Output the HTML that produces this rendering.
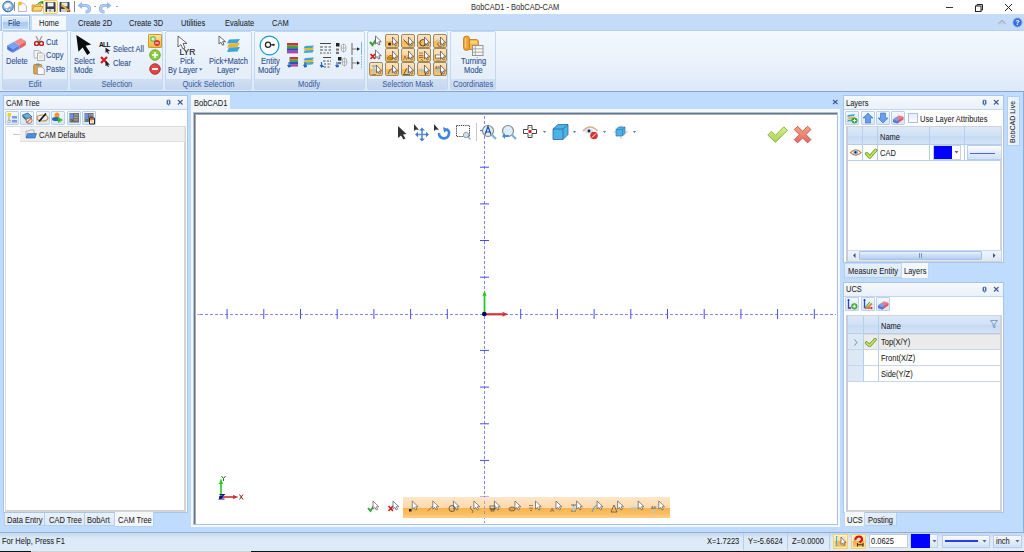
<!DOCTYPE html>
<html><head><meta charset="utf-8">
<style>
*{box-sizing:border-box;margin:0;padding:0}
html,body{width:1024px;height:552px;overflow:hidden;background:#bfdbfd;font-family:"Liberation Sans",sans-serif;font-size:8.5px;color:#222}
.a{position:absolute}
.t{position:absolute;white-space:nowrap;line-height:1;transform:scaleX(.915);transform-origin:0 0;-webkit-text-stroke:.05px currentColor}
.g{position:absolute;top:31px;height:59px;border:1px solid #c3d7f0;border-radius:2px;background:linear-gradient(#f1f7fe,#e6eff9 70%,#e2ecf8)}
.gl{position:absolute;left:0;right:0;bottom:0;height:10px;background:linear-gradient(#cfdff3,#c6d8ef);color:#3d5fa0;text-align:center;font-size:8.2px;line-height:11px;white-space:nowrap;-webkit-text-stroke:.05px currentColor}
.ob{position:absolute;width:14px;height:14px;border:1px solid #9c8a5e;border-radius:2px;background:linear-gradient(#fde2bc 0%,#fcd7a8 48%,#f9b552 55%,#fbc46c 100%);overflow:hidden}
.ob svg{position:absolute;left:0;top:0}
.tb{position:absolute;width:14px;height:14px;border:1px solid #b9d1ef;border-radius:1px;background:linear-gradient(#f3f8fe,#d6e6f8)}
.gl span{display:inline-block;transform:scaleX(.915)}
.rb{position:absolute;white-space:nowrap;line-height:1;font-size:8.2px;transform:scaleX(.915);transform-origin:0 0;color:#2f4f8f;-webkit-text-stroke:.1px currentColor}
</style></head><body>
<!-- title bar -->
<div class="a" style="left:0;top:0;width:1024px;height:14px;background:#fff"></div>
<div class="t" style="left:471px;top:4px;font-size:8.2px;color:#333">BobCAD1 - BobCAD-CAM</div>
<!-- QAT -->
<svg class="a" style="left:1px;top:0" width="124" height="14" viewBox="0 0 124 14">
<circle cx="7" cy="6.5" r="5.3" fill="#8fb6e0" stroke="#3a70b0" stroke-width="1"/>
<path d="M3 5 Q5.5 2.2 9 3.5 L10.8 6.5 L8.5 6.2 L6 8.5 L3.5 7.5 Z" fill="#f2f8ff"/><path d="M5 9.8 H6.2 M7.8 9.8 H9" stroke="#fff" stroke-width="1.3"/>
<path d="M2.5 9 Q4 11.5 7 11.8" stroke="#2a5aa0" stroke-width=".8" fill="none"/>
<path d="M13.5 2 V11" stroke="#888" stroke-width="1"/>
<path d="M17.5 3 H22.5 L25.5 6 V11.5 H17.5 Z" fill="#fafafa" stroke="#aaa" stroke-width=".8"/>
<circle cx="19" cy="3.5" r="2" fill="#f0c020"/>
<path d="M31 5 H35 L36 4 H40 V11 H31 Z" fill="#f0c860" stroke="#c08a20" stroke-width=".7"/>
<path d="M31 11 L33 6.5 H42 L40 11 Z" fill="#f7d778" stroke="#c08a20" stroke-width=".7"/>
<path d="M37 3.5 Q39 1.5 41 2 L41 1 L42.5 2.8 L41 4 L41 3" stroke="#2a9a2a" stroke-width="1" fill="#2a9a2a"/>
<rect x="42.5" y=".5" width="14" height="13" rx="1.5" fill="#fdf3d0" stroke="#f4cc60" stroke-width="1"/>
<rect x="44.5" y="2" width="10" height="10" rx="1" fill="#3a3d4c"/><rect x="46.5" y="2.5" width="6" height="4" fill="#f2f2f2"/><rect x="46" y="9" width="7" height="3" fill="#ddd"/><rect x="48.5" y="9.5" width="1" height="2" fill="#555"/>
<rect x="58.5" y="2" width="10" height="10" rx="1" fill="#3a3d4c"/><rect x="60.5" y="2.5" width="6" height="4" fill="#e8e8e8"/><rect x="60" y="9" width="6" height="3" fill="#ccc"/>
<path d="M61 5 L68 11" stroke="#e8b030" stroke-width="2"/><circle cx="68.5" cy="11" r="1" fill="#d03030"/>
<path d="M73.5 1 V12" stroke="#888" stroke-width="1"/>
<path d="M80 5.5 H84 Q88.5 5.5 88.5 8.8 Q88.5 12 84.5 12" stroke="#8fb0e0" stroke-width="3.2" fill="none"/><path d="M80 5.5 H84 Q88.5 5.5 88.5 8.8 Q88.5 12 84.5 12" stroke="#b8d0f2" stroke-width="1.6" fill="none"/><path d="M76.5 5.5 L81 2 V9 Z" fill="#9ab8e6"/>
<path d="M93 6.5 H95" stroke="#8aa8d0" stroke-width="1"/>
<path d="M106 5.5 H103 Q99.5 5.5 99.5 8.8 Q99.5 12 103.5 12" stroke="#8fb0e0" stroke-width="3.2" fill="none"/><path d="M106 5.5 H103 Q99.5 5.5 99.5 8.8 Q99.5 12 103.5 12" stroke="#b8d0f2" stroke-width="1.6" fill="none"/><path d="M110.5 5.5 L106 2 V9 Z" fill="#9ab8e6"/>
<path d="M115 6.5 H117" stroke="#8aa8d0" stroke-width="1"/>
</svg>
<!-- window controls -->
<div class="a" style="left:946px;top:7px;width:7px;height:1px;background:#333"></div>
<svg class="a" style="left:974px;top:3px" width="10" height="10" viewBox="0 0 10 10"><rect x="1.5" y="3" width="5.5" height="5.5" fill="none" stroke="#222" stroke-width="1"/><path d="M3 3 V1.5 H8.5 V7 H7" fill="none" stroke="#222" stroke-width="1"/></svg>
<svg class="a" style="left:1004px;top:3px" width="9" height="9" viewBox="0 0 9 9"><path d="M1 1 L8 8 M8 1 L1 8" stroke="#222" stroke-width="1"/></svg>
<!-- ribbon tab strip -->
<div class="a" style="left:0;top:14px;width:1024px;height:17px;background:#c4dcf8"></div>
<div class="a" style="left:1px;top:15px;width:29px;height:16px;background:linear-gradient(#e2eefc 0%,#d0e2f8 42%,#a8c8ef 47%,#b4d2f4 75%,#c6def9 100%);border:1px solid #9ebde6;box-shadow:inset 0 0 0 1px rgba(255,255,255,.6)"></div>
<div class="t" style="left:8px;top:20px;font-size:8.2px;color:#1f3f7a">File</div>
<div class="a" style="left:31px;top:15px;width:36px;height:17px;background:#f3f8fe;border:1px solid #c9dbef;border-bottom:none"></div>
<div class="t" style="left:39px;top:20px;font-size:8.2px;color:#222">Home</div>
<div class="t" style="left:78px;top:20px;font-size:8.2px;color:#222">Create 2D</div>
<div class="t" style="left:129px;top:20px;font-size:8.2px;color:#222">Create 3D</div>
<div class="t" style="left:181px;top:20px;font-size:8.2px;color:#222">Utilities</div>
<div class="t" style="left:225px;top:20px;font-size:8.2px;color:#222">Evaluate</div>
<div class="t" style="left:272px;top:20px;font-size:8.2px;color:#222">CAM</div>
<svg class="a" style="left:997px;top:18px" width="10" height="8" viewBox="0 0 10 8"><path d="M1.5 5.5 L5 2.5 L8.5 5.5" stroke="#999" stroke-width="1" fill="none"/><path d="M2.5 6.8 L5 4.6 L7.5 6.8" stroke="#bbb" stroke-width=".8" fill="none"/></svg>
<svg class="a" style="left:1012px;top:17px" width="11" height="11" viewBox="0 0 11 11"><circle cx="5.5" cy="5.5" r="4.7" fill="#3a6ad8" stroke="#a8c4ec" stroke-width="1"/><text x="5.5" y="8.3" font-size="7" font-weight="bold" fill="#fff" text-anchor="middle" font-family="Liberation Sans">?</text></svg>
<!-- ribbon body -->
<div class="a" style="left:0;top:30px;width:1024px;height:62px;background:linear-gradient(#d9e8fb,#c9ddf6);border-top:1px solid #b5cff0;border-bottom:1px solid #82a7d6"></div>
<div class="a" style="left:0;top:31px;width:1024px;height:60px;background:linear-gradient(#f3f8fe 0%,#eaf2fc 55%,#dce9f8 100%)"></div>
<!-- groups -->
<div class="g" style="left:2px;width:66px"><div class="gl"><span>Edit</span></div></div>
<div class="g" style="left:70px;width:93px"><div class="gl"><span>Selection</span></div></div>
<div class="g" style="left:165px;width:87px"><div class="gl"><span>Quick Selection</span></div></div>
<div class="g" style="left:254px;width:111px"><div class="gl"><span>Modify</span></div></div>
<div class="g" style="left:367px;width:81px"><div class="gl"><span>Selection Mask</span></div></div>
<div class="g" style="left:450px;width:46px"><div class="gl"><span>Coordinates</span></div></div>
<!-- ribbon content -->
<!-- Edit -->
<svg class="a" style="left:4px;top:34px" width="26" height="22" viewBox="4 34 26 22">
<path d="M7.2 45.6 L14 41.8 L19.5 45.2 L12.8 49 Z" fill="#7aa2f4"/>
<path d="M14 41.8 L20.7 38 L26 41.2 L19.5 45.2 Z" fill="#f48a8a"/>
<path d="M7.2 45.6 L12.8 49 L12.8 52.7 L7.2 49.6 Z" fill="#4a72dc"/>
<path d="M12.8 49 L19.5 45.2 L19.3 49 L12.8 52.7 Z" fill="#5a82e4"/>
<path d="M19.5 45.2 L26 41.2 L25.7 45.2 L19.3 49 Z" fill="#e46060"/>
</svg>
<div class="rb" style="left:6px;top:58px">Delete</div>
<svg class="a" style="left:34px;top:36px" width="10" height="10" viewBox="0 0 10 10">
<path d="M2 0 L5 6 M8 0 L5 6" stroke="#999" stroke-width="1.2"/>
<circle cx="2.6" cy="7.5" r="2" fill="none" stroke="#b8231c" stroke-width="1.6"/>
<circle cx="7.4" cy="7.5" r="2" fill="none" stroke="#b8231c" stroke-width="1.6"/>
</svg>
<div class="rb" style="left:46px;top:39px">Cut</div>
<svg class="a" style="left:33px;top:50px" width="12" height="11" viewBox="0 0 12 11">
<path d="M1 .5 H6 L7.5 2 V8 H1 Z" fill="#f4f4f4" stroke="#aaa" stroke-width=".8"/>
<path d="M4.5 3 H9.5 L11.5 5 V10.5 H4.5 Z" fill="#f8f8f8" stroke="#999" stroke-width=".8"/>
<path d="M6 6 H10 M6 8 H10" stroke="#bbb" stroke-width=".7"/>
</svg>
<div class="rb" style="left:46px;top:52px">Copy</div>
<svg class="a" style="left:33px;top:63px" width="12" height="12" viewBox="0 0 12 12">
<rect x=".7" y="1.5" width="8" height="9.5" rx="1" fill="#d9a650" stroke="#a87828" stroke-width=".8"/>
<rect x="3" y=".5" width="3.5" height="2" fill="#888"/>
<path d="M4.5 4 H9 L11.3 6.3 V11.5 H4.5 Z" fill="#f8f8f8" stroke="#999" stroke-width=".8"/>
</svg>
<div class="rb" style="left:46px;top:66px">Paste</div>
<!-- Selection -->
<svg class="a" style="left:75px;top:34px" width="18" height="22" viewBox="75 34 18 22">
<path d="M76.3 35 L91.2 44.6 L85.6 45.8 L90.2 52.8 L87.2 54.9 L82.6 47.6 L78.4 51.8 Z" fill="#0c0c0c"/>
</svg>
<div class="rb" style="left:74px;top:58px">Select</div>
<div class="rb" style="left:74px;top:67px">Mode</div>
<div class="a" style="left:99px;top:42px;font-size:6.5px;font-weight:bold;letter-spacing:-.6px;line-height:1;color:#111">ALL</div>
<svg class="a" style="left:105px;top:47px" width="6" height="7" viewBox="0 0 6 7"><path d="M.5 .5 L5.5 4 L3 4.3 L4 6.5 L3 7 L2 4.8 L.5 6 Z" fill="#222"/></svg>
<div class="rb" style="left:113px;top:46px">Select All</div>
<svg class="a" style="left:100px;top:56px" width="11" height="11" viewBox="0 0 11 11">
<path d="M1 1 L7 7 M7 1 L1 7" stroke="#d02020" stroke-width="2.2"/>
<path d="M5.5 5 L10 8.5 L8 8.8 L9 10.8 L8 11 L7 9.2 L5.5 10.3 Z" fill="#222"/>
</svg>
<div class="rb" style="left:113px;top:59.5px">Clear</div>
<div class="a" style="left:148px;top:34px;width:14px;height:14px;border:1px solid #c99a2c;background:linear-gradient(#fde3a0,#f7b445);border-radius:1px"></div>
<svg class="a" style="left:149px;top:35px" width="12" height="12" viewBox="0 0 12 12">
<circle cx="4" cy="4" r="3" fill="#7cc243"/><path d="M2.3 4 H5.7 M4 2.3 V5.7" stroke="#fff" stroke-width="1"/>
<circle cx="8" cy="8" r="3" fill="#d83a3a"/><path d="M6.3 8 H9.7" stroke="#fff" stroke-width="1"/>
</svg>
<svg class="a" style="left:149px;top:49px" width="12" height="12" viewBox="0 0 12 12">
<circle cx="6" cy="6" r="5.3" fill="#8ccc3f" stroke="#5c9e22" stroke-width=".8"/><path d="M3 6 H9 M6 3 V9" stroke="#fff" stroke-width="1.6"/>
</svg>
<svg class="a" style="left:149px;top:63px" width="12" height="12" viewBox="0 0 12 12">
<circle cx="6" cy="6" r="5.3" fill="#e04848" stroke="#a82020" stroke-width=".8"/><path d="M3 6 H9" stroke="#fff" stroke-width="1.8"/>
</svg>
<!-- Quick Selection -->
<svg class="a" style="left:177px;top:35px" width="12" height="15" viewBox="0 0 12 15">
<path d="M1 1 L1 12 L3.8 9.5 L6 14 L8 13 L6 8.5 L10 8.5 Z" fill="#fff" stroke="#555" stroke-width=".9"/>
</svg>
<div class="a" style="left:179.5px;top:48px;font-size:8.5px;line-height:1;color:#222;-webkit-text-stroke:.15px #222">LYR</div>
<div class="rb" style="left:180px;top:58px">Pick</div>
<div class="rb" style="left:168px;top:67px">By Layer</div>
<svg class="a" style="left:218px;top:35px" width="10" height="11" viewBox="0 0 10 11">
<path d="M1 1 L1 9 L3 7.3 L4.5 10.2 L6 9.5 L4.6 6.7 L7.5 6.7 Z" fill="#fff" stroke="#555" stroke-width=".9"/>
</svg>
<svg class="a" style="left:226px;top:38px" width="15" height="15" viewBox="0 0 15 15">
<path d="M3 1.5 L14 1 L11.5 5 L1 5.5 Z" fill="#3aa6e0"/>
<path d="M3 5.5 L14 5 L11.5 9 L1 9.5 Z" fill="#f3b51b"/>
<path d="M3 9.5 L14 9 L11.5 13.5 L1 14 Z" fill="#3aa6e0"/>
</svg>
<div class="rb" style="left:209px;top:58px">Pick+Match</div>
<div class="rb" style="left:217px;top:67px">Layer</div>
<svg class="a" style="left:198.5px;top:67.5px" width="4" height="3" viewBox="0 0 4 3"><path d="M0 .5 H3.5 L1.75 2.5 Z" fill="#3a5a98"/></svg>
<svg class="a" style="left:236px;top:67.5px" width="4" height="3" viewBox="0 0 4 3"><path d="M0 .5 H3.5 L1.75 2.5 Z" fill="#3a5a98"/></svg>
<!-- Modify -->
<svg class="a" style="left:259px;top:35px" width="21" height="21" viewBox="0 0 21 21">
<circle cx="10.5" cy="10.5" r="9.4" fill="#fff" stroke="#1f9ad4" stroke-width="1.3"/>
<circle cx="9" cy="9.8" r="2.6" fill="none" stroke="#222" stroke-width="1.2"/>
<path d="M11.6 9.8 H15.5" stroke="#222" stroke-width="1.2"/><circle cx="14.5" cy="9.8" r="1.1" fill="#222"/>
</svg>
<div class="rb" style="left:261px;top:58px">Entity</div>
<div class="rb" style="left:258px;top:67px">Modify</div>
<svg class="a" style="left:286px;top:42px" width="80" height="28" viewBox="0 0 80 28">
<rect x="1" y="1" width="11" height="2.6" fill="#d83030"/><rect x="1" y="3.6" width="11" height="2.6" fill="#38a838"/><rect x="1" y="6.2" width="11" height="2.6" fill="#3a4ab8"/><rect x="1" y="8.8" width="11" height="2.6" fill="#a848a8"/>
<path d="M19 4 L28 3.5 L26.5 6 L17.5 6.5 Z" fill="#3aa6e0"/><path d="M19 6.3 L28 5.8 L26.5 8.3 L17.5 8.8 Z" fill="#f3b51b"/><path d="M19 8.6 L28 8.1 L26.5 10.6 L17.5 11.1 Z" fill="#3aa6e0"/>
<path d="M34 1.5 H45" stroke="#444" stroke-width="1"/><path d="M34 5 H37 M38.5 5 H41 M42.5 5 H45 M34 8 H37 M38.5 8 H41 M42.5 8 H45 M34 11 H36 M37.5 11 H39.5 M41 11 H43 M44 11 H45" stroke="#555" stroke-width="1"/>
<rect x="50" y="1" width="3.5" height="3.5" fill="#222"/><rect x="50" y="6.5" width="3" height="2.2" fill="#777"/><rect x="50" y="9.8" width="3" height="2.2" fill="#777"/><ellipse cx="57.5" cy="6" rx="2.6" ry="4" fill="none" stroke="#999" stroke-width=".7"/><path d="M57.5 2 V10 M55 6 H60" stroke="#999" stroke-width=".6"/>
<path d="M66 1 V13" stroke="#555" stroke-width=".9"/><path d="M75.5 0 V13" stroke="#5ab8ec" stroke-width=".9"/><path d="M66 7 H72" stroke="#777" stroke-width=".9"/><path d="M71 5.3 L74 7 L71 8.7 Z" fill="#222"/>
<g transform="translate(0,14)">
<rect x="3.5" y="1" width="8.5" height="2.4" fill="#d83030"/><rect x="3.5" y="3.4" width="8.5" height="2.4" fill="#38a838"/><rect x="3.5" y="5.8" width="8.5" height="2.4" fill="#3a4ab8"/><rect x="3.5" y="8.2" width="8.5" height="2.4" fill="#a848a8"/>
<path d="M3 6 V10.5 H5 M1.5 9 L3 11 L4.5 9" stroke="#2060c0" stroke-width="1.1" fill="none"/>
<path d="M19 2 L28 1.5 L26.5 4 L17.5 4.5 Z" fill="#3aa6e0"/><path d="M19 4.3 L28 3.8 L26.5 6.3 L17.5 6.8 Z" fill="#f3b51b"/><path d="M19 6.6 L28 6.1 L26.5 8.6 L17.5 9.1 Z" fill="#3aa6e0"/>
<path d="M19 6 V10.5 H21 M17.5 9 L19 11 L20.5 9" stroke="#2060c0" stroke-width="1.1" fill="none"/>
<path d="M37 1.5 H45" stroke="#444" stroke-width="1"/><path d="M37 5 H39.5 M41 5 H43 M44 5 H45 M38 8 H40 M41.5 8 H43.5 M44.5 8 H45 M38 11 H40 M41.5 11 H43.5" stroke="#555" stroke-width="1"/>
<path d="M35.5 6 V10.5 H38 M34 9 L35.5 11 L37 9" stroke="#2060c0" stroke-width="1.1" fill="none"/>
<rect x="52" y="1" width="3.5" height="3.5" fill="#222"/><rect x="52" y="6" width="3" height="2.2" fill="#777"/><ellipse cx="58.5" cy="6" rx="2.4" ry="4" fill="none" stroke="#999" stroke-width=".7"/><path d="M58.5 2 V10 M56 6 H61" stroke="#999" stroke-width=".6"/>
<path d="M51 6 V10.5 H53 M49.5 9 L51 11 L52.5 9" stroke="#2060c0" stroke-width="1.1" fill="none"/>
<path d="M66 1 V13" stroke="#555" stroke-width=".9"/><path d="M75.5 0 V13" stroke="#5ab8ec" stroke-width=".9" stroke-dasharray="1.5 1"/><path d="M66 7 H72" stroke="#777" stroke-width=".9"/><path d="M71 5.3 L74 7 L71 8.7 Z" fill="#222"/>
</g>
</svg>
<!-- Selection Mask -->
<svg class="a" style="left:369px;top:35px" width="13" height="26" viewBox="0 0 13 26">
<path d="M1 7 L3.5 10 L8 3" stroke="#3aa030" stroke-width="2" fill="none"/>
<path d="M6.5 1 L6.5 9 L8.3 7.5 L9.6 10 L11 9.3 L9.8 6.8 L12.3 6.7 Z" fill="#fff" stroke="#555" stroke-width=".8"/>
<path d="M1.5 19 L6 24 M6 19 L1.5 24" stroke="#d02020" stroke-width="1.8"/>
<path d="M6.5 15 L6.5 23 L8.3 21.5 L9.6 24 L11 23.3 L9.8 20.8 L12.3 20.7 Z" fill="#fff" stroke="#555" stroke-width=".8"/>
</svg>
<div class="ob" style="left:385px;top:34px"><svg width="13" height="13" viewBox="0 0 13 13"><rect x="2.3" y="7.8" width="2.6" height="2.6" fill="#222"/><path d="M6.5 2 V9.8 L8.1 8.5 L9.2 10.9 L10.4 10.4 L9.3 8 L11.5 7.9 Z" fill="#fff" stroke="#444" stroke-width=".7"/></svg></div>
<div class="ob" style="left:401px;top:34px"><svg width="13" height="13" viewBox="0 0 13 13"><path d="M1.5 4.5 L8 11.5" stroke="#333" stroke-width=".8"/><path d="M6.5 2 V9.8 L8.1 8.5 L9.2 10.9 L10.4 10.4 L9.3 8 L11.5 7.9 Z" fill="#fff" stroke="#444" stroke-width=".7"/></svg></div>
<div class="ob" style="left:417px;top:34px"><svg width="13" height="13" viewBox="0 0 13 13"><circle cx="5" cy="7.8" r="3.2" fill="none" stroke="#333" stroke-width=".9"/><path d="M6.5 2 V9.8 L8.1 8.5 L9.2 10.9 L10.4 10.4 L9.3 8 L11.5 7.9 Z" fill="#fff" stroke="#444" stroke-width=".7"/></svg></div>
<div class="ob" style="left:433px;top:34px"><svg width="13" height="13" viewBox="0 0 13 13"><path d="M2 5.5 Q5 4.5 6 6" stroke="#8ad0f0" stroke-width="1" fill="none"/><path d="M5 7.5 Q2.5 8.5 4.5 11 Q6 12 8 11" stroke="#555" stroke-width=".8" fill="none"/><path d="M6.5 2 V9.8 L8.1 8.5 L9.2 10.9 L10.4 10.4 L9.3 8 L11.5 7.9 Z" fill="#fff" stroke="#444" stroke-width=".7"/></svg></div>
<div class="ob" style="left:385px;top:48px"><svg width="13" height="13" viewBox="0 0 13 13"><path d="M1.5 8.5 L4 6.5 L7.5 7 L7.5 9.5 L5 11 L1.5 10.5 Z" fill="#f0a020" stroke="#7a5010" stroke-width=".6"/><path d="M1.5 8.5 L5 9 L7.5 7 M5 9 V11" stroke="#7a5010" stroke-width=".5" fill="none"/><path d="M6.5 2 V9.8 L8.1 8.5 L9.2 10.9 L10.4 10.4 L9.3 8 L11.5 7.9 Z" fill="#fff" stroke="#444" stroke-width=".7"/></svg></div>
<div class="ob" style="left:401px;top:48px"><svg width="13" height="13" viewBox="0 0 13 13"><path d="M1.5 11 L3 7 L4.5 10.5 L6 8 L7.5 10" stroke="#666" stroke-width=".7" fill="none"/><path d="M6.5 2 V9.8 L8.1 8.5 L9.2 10.9 L10.4 10.4 L9.3 8 L11.5 7.9 Z" fill="#fff" stroke="#444" stroke-width=".7"/></svg></div>
<div class="ob" style="left:417px;top:48px"><svg width="13" height="13" viewBox="0 0 13 13"><path d="M2 3.5 V4.5 M4 3.5 V4.5 M2 5.8 V6.8 M4 5.8 V6.8 M2 8 V9 M4 8 V9 M3.5 10.5 L4.5 11.5" stroke="#222" stroke-width="1"/><path d="M6.5 2 V9.8 L8.1 8.5 L9.2 10.9 L10.4 10.4 L9.3 8 L11.5 7.9 Z" fill="#fff" stroke="#444" stroke-width=".7"/></svg></div>
<div class="ob" style="left:433px;top:48px"><svg width="13" height="13" viewBox="0 0 13 13"><rect x="1.5" y="6" width="6" height="3" fill="#fff" stroke="#555" stroke-width=".6"/><rect x="3" y="9.5" width="3.5" height="2" fill="none" stroke="#888" stroke-width=".6"/><path d="M6.5 2 V9.8 L8.1 8.5 L9.2 10.9 L10.4 10.4 L9.3 8 L11.5 7.9 Z" fill="#fff" stroke="#444" stroke-width=".7"/></svg></div>
<div class="ob" style="left:369px;top:62px"><svg width="13" height="13" viewBox="0 0 13 13"><path d="M1.8 3 H6 M1.8 11.5 H6" stroke="#777" stroke-width=".8"/><path d="M3 3.5 L5 3.5 L4.5 11 L3.5 11 Z" fill="#90d4f4"/><path d="M6.5 2 V9.8 L8.1 8.5 L9.2 10.9 L10.4 10.4 L9.3 8 L11.5 7.9 Z" fill="#fff" stroke="#444" stroke-width=".7"/></svg></div>
<div class="ob" style="left:385px;top:62px"><svg width="13" height="13" viewBox="0 0 13 13"><path d="M2 11 Q3 6.5 7 5" stroke="#444" stroke-width=".8" fill="none"/><path d="M4 10.5 L6.5 9" stroke="#8ad0f0" stroke-width="1.4"/><path d="M6.5 2 V9.8 L8.1 8.5 L9.2 10.9 L10.4 10.4 L9.3 8 L11.5 7.9 Z" fill="#fff" stroke="#444" stroke-width=".7"/></svg></div>
<div class="ob" style="left:401px;top:62px"><svg width="13" height="13" viewBox="0 0 13 13"><path d="M1.5 11.5 L5 5 M1.5 11.5 H8" stroke="#444" stroke-width=".8" fill="none"/><path d="M5 8 L7 11" stroke="#8ad0f0" stroke-width="1.4"/><path d="M6.5 2 V9.8 L8.1 8.5 L9.2 10.9 L10.4 10.4 L9.3 8 L11.5 7.9 Z" fill="#fff" stroke="#444" stroke-width=".7"/></svg></div>
<div class="ob" style="left:417px;top:62px"><svg width="13" height="13" viewBox="0 0 13 13"><path d="M1 7 Q4 6 7 7.5" stroke="#8ad0f0" stroke-width="1.6" fill="none"/><circle cx="7.5" cy="11" r=".8" fill="#111"/><path d="M6.5 2 V9.8 L8.1 8.5 L9.2 10.9 L10.4 10.4 L9.3 8 L11.5 7.9 Z" fill="#fff" stroke="#444" stroke-width=".7"/></svg></div>
<div class="ob" style="left:433px;top:62px"><svg width="13" height="13" viewBox="0 0 13 13"><text x="1" y="6" font-size="3.6" fill="#444" font-family="Liberation Sans">AB</text><path d="M1.5 8 Q4 7.5 6 9" stroke="#8ad0f0" stroke-width="1.4" fill="none"/><circle cx="7.5" cy="11" r=".8" fill="#111"/><path d="M6.5 2 V9.8 L8.1 8.5 L9.2 10.9 L10.4 10.4 L9.3 8 L11.5 7.9 Z" fill="#fff" stroke="#444" stroke-width=".7"/></svg></div>
<!-- Coordinates -->
<svg class="a" style="left:462px;top:35px" width="23" height="21" viewBox="462 35 23 21">
<rect x="467" y="39.5" width="11.5" height="10" rx="2.5" fill="#f6b444" stroke="#b87818" stroke-width=".8"/>
<rect x="468" y="41" width="9" height="2.5" fill="#fcd890" opacity=".8"/>
<rect x="463.5" y="36" width="6" height="14.5" rx="3" fill="#f0a030" stroke="#b87818" stroke-width=".8"/>
<rect x="464.8" y="38" width="1.6" height="10" fill="#fbd088" opacity=".8"/>
<rect x="472.5" y="45.5" width="10.5" height="10" fill="#f6f6f6" stroke="#8c8c8c" stroke-width=".9"/>
<path d="M472.5 48.8 H483 M472.5 52.2 H483 M475.3 45.5 V55.5" stroke="#9a9a9a" stroke-width=".8"/>
</svg>
<div class="rb" style="left:461px;top:58px">Turning</div>
<div class="rb" style="left:464px;top:67px">Mode</div>
<!-- left panel -->
<div class="a" style="left:3px;top:95px;width:185px;height:418px;background:#fff;border:1px solid #a9c5ea"></div>
<div class="a" style="left:4px;top:96px;width:183px;height:14px;background:linear-gradient(#f6f9fd,#eaf1fa);border-bottom:1px solid #c2d6ee"></div>
<div class="t" style="left:6px;top:100px;font-size:8.2px;color:#222">CAM Tree</div>
<svg class="a" style="left:165px;top:98px" width="20" height="9" viewBox="0 0 20 9">
<rect x="1.6" y="1.8" width="3.8" height="5" rx="1.4" fill="#4a6ca8"/><rect x="3" y="2.6" width="1" height="3" fill="#e8eef8"/><path d="M3.5 6.8 V8" stroke="#7a92c0" stroke-width=".8"/>
<path d="M13 2 L17.5 6.5 M17.5 2 L13 6.5" stroke="#3a5a98" stroke-width="1.1"/>
</svg>
<div class="tb" style="left:5px;top:111px"></div>
<div class="tb" style="left:20px;top:111px"></div>
<div class="tb" style="left:36px;top:111px"></div>
<div class="tb" style="left:51px;top:111px"></div>
<div class="tb" style="left:67px;top:111px"></div>
<div class="tb" style="left:82px;top:111px"></div>
<svg class="a" style="left:5px;top:111px" width="92" height="14" viewBox="0 0 92 14">
<rect x="2.5" y="2" width="3.5" height="3.5" fill="#f0d020"/><path d="M4 5.5 V10 M4 10 H6" stroke="#888" stroke-width=".8"/><circle cx="4" cy="10.5" r="1.2" fill="#fff" stroke="#888" stroke-width=".6"/>
<rect x="7" y="5" width="5" height="2.5" fill="#7a9ee0"/><rect x="7" y="9" width="5" height="2.5" fill="#7a9ee0"/>
<path d="M17.5 4 L23 2 L27 6 L21.5 8 Z" fill="#5ab4e0" stroke="#235" stroke-width=".6"/><path d="M17.5 4 L21.5 8 L21.5 10 L17.5 6 Z" fill="#2a6a9a"/>
<circle cx="24" cy="9.5" r="3" fill="none" stroke="#c87a40" stroke-width="1"/><path d="M21.5 12 L26.5 7" stroke="#d03030" stroke-width="1"/>
<ellipse cx="37.5" cy="7" rx="5.5" ry="3" fill="none" stroke="#c88a30" stroke-width="1.2"/><path d="M34 10.5 L41 2.5" stroke="#111" stroke-width="1.6"/>
<circle cx="52" cy="4" r="2.5" fill="#f0962a"/><ellipse cx="51" cy="8" rx="4" ry="2" fill="#2a6aa8"/><path d="M53 6 L58 9 L53 12 Z" fill="#38c038"/>
<rect x="64.5" y="2" width="9.5" height="9.5" fill="#6e6e6e"/><rect x="65" y="2.5" width="3" height="5.5" fill="#6a90e0"/><path d="M69.5 3.8 H70.5 M71.5 3.8 H72.5 M69.5 6.3 H70.5 M71.5 6.3 H72.5 M69.5 8.8 H70.5 M71.5 8.8 H72.5" stroke="#e0e0e0" stroke-width="1.2"/><rect x="65.3" y="9" width="1.2" height="1.2" fill="#2c2"/><rect x="67" y="9" width="1.2" height="1.2" fill="#d22"/>
<rect x="79.5" y="2" width="9" height="9" fill="#6e6e6e"/><rect x="80" y="2.5" width="3" height="5.5" fill="#6a90e0"/><path d="M84.5 3.8 H85.5 M86.5 3.8 H87.5" stroke="#e0e0e0" stroke-width="1.2"/><rect x="80.3" y="9" width="1.2" height="1.2" fill="#2c2"/><rect x="84" y="6.5" width="6" height="7" rx="1.2" fill="#2a2a2a"/><rect x="85" y="7.5" width="4" height="5" fill="#f4f0e0"/><path d="M85.5 9 L88 11.5" stroke="#e0a020" stroke-width="1"/><rect x="85" y="7.5" width="4" height="1.3" fill="#d04040"/>
</svg>
<div class="a" style="left:5px;top:126px;width:181px;height:386px;background:#fff;border-top:1px solid #d8dde3;border-left:1px solid #d8dde3;border-right:2px solid #d4d4d4;border-bottom:2px solid #d4d4d4"></div>
<div class="a" style="left:13px;top:134px;width:7px;height:1px;background:#c8c8c8"></div>
<div class="a" style="left:20px;top:127px;width:165px;height:15px;background:#f0f0f0;border-bottom:1px solid #dedede;border-right:1px solid #e4e4e4"></div>
<svg class="a" style="left:25px;top:129px" width="12" height="10" viewBox="0 0 12 10">
<path d="M1 2 H4 L5 1 H9 V8 H1 Z" fill="#eee" stroke="#999" stroke-width=".7"/>
<path d="M1 9 L2.5 4.5 H11.5 L10 9 Z" fill="#4a8ee0" stroke="#2a5ea8" stroke-width=".6"/>
</svg>
<div class="t" style="left:38.5px;top:132px;font-size:8.2px;color:#222">CAM Defaults</div>
<!-- left bottom tabs -->
<div class="a" style="left:4px;top:513px;width:41px;height:13px;background:linear-gradient(#e9f1fb,#dce8f7);border:1px solid #b7cfee;border-top:none"></div>
<div class="t" style="left:7px;top:517px;font-size:8.2px;color:#222">Data Entry</div>
<div class="a" style="left:45px;top:513px;width:40px;height:13px;background:linear-gradient(#e9f1fb,#dce8f7);border:1px solid #b7cfee;border-top:none;border-left:none"></div>
<div class="t" style="left:49px;top:517px;font-size:8.2px;color:#222">CAD Tree</div>
<div class="a" style="left:85px;top:513px;width:30px;height:13px;background:linear-gradient(#e9f1fb,#dce8f7);border:1px solid #b7cfee;border-top:none;border-left:none"></div>
<div class="t" style="left:87px;top:517px;font-size:8.2px;color:#222">BobArt</div>
<div class="a" style="left:115px;top:512px;width:39px;height:15px;background:#f4f8fd;border:1px solid #b7cfee;border-top:none;border-left:none"></div>
<div class="t" style="left:118px;top:517px;font-size:8.2px;color:#222">CAM Tree</div>
<!-- doc area -->
<div class="a" style="left:191px;top:95px;width:39px;height:15px;background:linear-gradient(#f7fafe,#eef4fc)"></div>
<div class="t" style="left:194px;top:100px;font-size:8.2px;color:#222">BobCAD1</div>
<div class="a" style="left:191px;top:109px;width:649px;height:418px;background:#f5f9fe"></div>
<div class="a" style="left:193px;top:112px;width:645px;height:413px;background:#fff;border:1px solid #a9c3e6"></div>
<div class="a" style="left:194px;top:113px;width:643px;height:411px;border-top:1px solid #6d737b;border-left:1px solid #6d737b;box-shadow:inset 1px 1px 0 #a8acb2"></div>
<svg class="a" style="left:194px;top:113px" width="643" height="411" viewBox="194 113 643 411">
<path d="M200 314.5 H836" stroke="#8484f6" stroke-width="1" stroke-dasharray="3 2"/>
<path d="M197.5 314.5 H199.5" stroke="#8484f6" stroke-width="1"/>
<path d="M484.5 116 V523" stroke="#8484f6" stroke-width="1" stroke-dasharray="3 2"/>
<path d="M227.1 309 V319 M263.8 309 V319 M300.5 309 V319 M337.2 309 V319 M373.9 309 V319 M410.6 309 V319 M447.3 309 V319 M520.7 309 V319 M557.4 309 V319 M594.1 309 V319 M630.8 309 V319 M667.5 309 V319 M704.2 309 V319 M740.9 309 V319 M777.6 309 V319 M814.3 309 V319 M480 130.6 H489 M480 167.2 H489 M480 203.9 H489 M480 240.5 H489 M480 277.2 H489 M480 350.4 H489 M480 387.1 H489 M480 423.8 H489 M480 460.4 H489 M480 497.1 H489 " stroke="#4a4af0" stroke-width="1"/>
<path d="M484.5 313 V294" stroke="#28c828" stroke-width="1.8"/><path d="M482.3 296.5 L484.5 290 L486.7 296.5 L484.5 295 Z" fill="#28c828"/>
<path d="M485 314.3 H504" stroke="#d83030" stroke-width="2.2"/><path d="M502 311.8 L508.5 314.3 L502 316.8 L503.5 314.3 Z" fill="#d83030"/>
<circle cx="484.3" cy="314" r="2.3" fill="#000060"/>
<!-- corner axes -->
<path d="M221 497 V483" stroke="#22cc22" stroke-width="1.6"/><path d="M219 484 L221 478.5 L223 484 Z" fill="#22cc22"/>
<path d="M222 497 H234" stroke="#d42a2a" stroke-width="1.6"/><path d="M233 495 L238.5 497 L233 499 Z" fill="#d42a2a"/>
<path d="M221.5 476 L223.5 478.5 L225.5 476 M223.5 478.5 V481" stroke="#207820" stroke-width="1" fill="none"/>
<path d="M239.5 494.5 L243 499.5 M243 494.5 L239.5 499.5" stroke="#902020" stroke-width="1"/>
<path d="M219.5 494.5 H224 L219.5 499 H224.5" stroke="#101090" stroke-width="1.2" fill="none"/>
<circle cx="220.8" cy="497.3" r="1.8" fill="#101080"/>
</svg>
<!-- view toolbar -->
<svg class="a" style="left:395px;top:122px" width="245" height="20" viewBox="395 122 245 20">
<path d="M398 126 L398 138 L401 135.5 L403.5 139.5 L405.5 138.5 L403 134.5 L406.5 134 Z" fill="#333"/>
<path d="M414 124 L414 131 L416 129.5 L419 130 Z" fill="#333"/>
<path d="M422 129.5 V139.5 M417 134.5 H427" stroke="#5a8ad8" stroke-width="1.6"/>
<path d="M422 127.5 L424.8 130.5 H419.2 Z M422 141.5 L424.8 138.5 H419.2 Z M415 134.5 L418 131.7 V137.3 Z M429 134.5 L426 131.7 V137.3 Z" fill="#4a7ad0"/>
<path d="M434 124 L434 131 L436 129.5 L439 130 Z" fill="#333"/>
<path d="M446.5 129 A5 5 0 1 1 439 133" stroke="#3f86e0" stroke-width="2.6" fill="none"/><path d="M443 127 L449 129.5 L444 132.5 Z" fill="#3f86e0"/>
<rect x="456.5" y="125.5" width="13" height="11" fill="none" stroke="#333" stroke-width="1" stroke-dasharray="1.2 1"/>
<circle cx="466" cy="135" r="2.6" fill="#cfe6f8" stroke="#888" stroke-width=".8"/><path d="M468 137 L470.5 139.5" stroke="#7aaee0" stroke-width="1.4"/>
<path d="M476.5 123 V141" stroke="#c8c8c8" stroke-width="1"/>
<circle cx="488" cy="131" r="5.5" fill="#dceefa" stroke="#888" stroke-width="1.2"/><path d="M492 135 L496 139" stroke="#7aaee0" stroke-width="2.2"/>
<path d="M485 134.5 L488 126.5 L491 134.5 M486 132 H490" stroke="#1a4a9a" stroke-width="1.2" fill="none"/>
<circle cx="508" cy="131" r="5.5" fill="#dceefa" stroke="#888" stroke-width="1.2"/><path d="M512 135 L516 139" stroke="#7aaee0" stroke-width="2.2"/>
<path d="M502 136 L505 133 V135 H509 V137 H505 V139 Z" fill="#4a88d8"/>
<path d="M528 125.5 H532 V129.5 H536.5 V133.5 H532 V137.5 H528 V133.5 H523.5 V129.5 H528 Z" fill="#fff" stroke="#333" stroke-width=".9"/>
<rect x="528.5" y="130" width="3" height="3" fill="#e02020"/><path d="M528 127.5 H532 M528 135.5 H532" stroke="#888" stroke-width=".5"/>
<path d="M543 131 H546 L544.5 133 Z" fill="#4a70b0"/>
<path d="M553 129 L558 124.5 H568 V134.5 L563 139.5 H553 Z" fill="#4ab4e6" stroke="#2a6a98" stroke-width=".8"/>
<path d="M553 129 H563 L568 124.5 M563 129 V139.5" stroke="#2a6a98" stroke-width=".8" fill="none"/>
<path d="M573 131 H576 L574.5 133 Z" fill="#4a70b0"/>
<path d="M583 131 Q590 123 597.5 131" stroke="#e0b080" stroke-width="1.6" fill="none"/>
<ellipse cx="589" cy="131" rx="4" ry="2.6" fill="#cfe2f8"/><circle cx="589" cy="131" r="1.4" fill="#224"/>
<circle cx="594" cy="135.5" r="3.8" fill="#d03838"/><path d="M592 137.5 L596 133.5" stroke="#fff" stroke-width="1"/>
<path d="M603 131 H606 L604.5 133 Z" fill="#4a70b0"/>
<path d="M613.5 132 H628 M621 125 V139" stroke="#f4a0a0" stroke-width=".8"/>
<path d="M616 129.5 L618.5 127 H625 V133.5 L622.5 136 H616 Z" fill="#4ab4e6" stroke="#3a7aa8" stroke-width=".7"/>
<path d="M616 129.5 H622.5 L625 127 M622.5 129.5 V136" stroke="#3a7aa8" stroke-width=".7" fill="none"/>
<path d="M633 131 H636 L634.5 133 Z" fill="#4a70b0"/>
</svg>
<svg class="a" style="left:766px;top:125px" width="47" height="19" viewBox="766 125 47 19">
<defs><linearGradient id="gck" x1="0" y1="0" x2="0" y2="1"><stop offset="0" stop-color="#dcf088"/><stop offset="1" stop-color="#a8d058"/></linearGradient>
<linearGradient id="gx" x1="0" y1="0" x2="0" y2="1"><stop offset="0" stop-color="#f0a47c"/><stop offset=".5" stop-color="#ea8a74"/><stop offset="1" stop-color="#e06464"/></linearGradient></defs>
<path d="M767.8 135 L771.5 131.3 L775.5 135.3 L783.8 126.8 L787.4 130.3 L775.5 142.3 Z" fill="url(#gck)" stroke="#8aba48" stroke-width="1"/>
<path d="M794.3 129.6 L797.6 126.3 L802.6 131.3 L807.6 126.3 L810.9 129.6 L805.9 134.6 L810.9 139.6 L807.6 142.9 L802.6 137.9 L797.6 142.9 L794.3 139.6 L799.3 134.6 Z" fill="url(#gx)" stroke="#cc5a54" stroke-width="1"/>
</svg>
<!-- bottom mask toolbar -->
<div class="a" style="left:403px;top:497px;width:267px;height:21px;background:linear-gradient(#fde6c8 0%,#fcd9ae 50%,#f9b24c 52%,#fbbe62 80%,#fcd08a 100%)"></div>
<svg class="a" style="left:366px;top:499px" width="305" height="17" viewBox="366 499 305 17">
<path d="M368 508 L370.5 511 L375 504" stroke="#3aa030" stroke-width="1.8" fill="none"/>
<path d="M373 501 V509 L375 507.5 L376.3 510 L377.6 509.3 L376.4 506.8 L378.8 506.7 Z" fill="#fff" stroke="#555" stroke-width=".7"/>
<path d="M388.5 506 L393 511 M393 506 L388.5 511" stroke="#d02020" stroke-width="1.6"/>
<path d="M393 501 V509 L395 507.5 L396.3 510 L397.6 509.3 L396.4 506.8 L398.8 506.7 Z" fill="#fff" stroke="#555" stroke-width=".7"/>
<path d="M412.3 501 V509 L414.3 507.5 L415.6 510 L416.9 509.3 L415.7 506.8 L418.1 506.7 Z" fill="#fff" stroke="#555" stroke-width=".7"/>
<path d="M432.8 501 V509 L434.8 507.5 L436.1 510 L437.4 509.3 L436.2 506.8 L438.6 506.7 Z" fill="#fff" stroke="#555" stroke-width=".7"/>
<path d="M427.8 511 L432.8 506" stroke="#444" stroke-width=".8" opacity=".7"/>
<path d="M453.4 501 V509 L455.4 507.5 L456.7 510 L458.0 509.3 L456.8 506.8 L459.2 506.7 Z" fill="#fff" stroke="#555" stroke-width=".7"/>
<path d="M473.9 501 V509 L475.9 507.5 L477.2 510 L478.5 509.3 L477.3 506.8 L479.7 506.7 Z" fill="#fff" stroke="#555" stroke-width=".7"/>
<path d="M494.4 501 V509 L496.4 507.5 L497.7 510 L499.0 509.3 L497.8 506.8 L500.2 506.7 Z" fill="#fff" stroke="#555" stroke-width=".7"/>
<path d="M515.0 501 V509 L517.0 507.5 L518.3 510 L519.6 509.3 L518.4 506.8 L520.8 506.7 Z" fill="#fff" stroke="#555" stroke-width=".7"/>
<path d="M535.5 501 V509 L537.5 507.5 L538.8 510 L540.1 509.3 L538.9 506.8 L541.3 506.7 Z" fill="#fff" stroke="#555" stroke-width=".7"/>
<path d="M556.0 501 V509 L558.0 507.5 L559.3 510 L560.6 509.3 L559.4 506.8 L561.8 506.7 Z" fill="#fff" stroke="#555" stroke-width=".7"/>
<path d="M576.6 501 V509 L578.6 507.5 L579.9 510 L581.2 509.3 L580.0 506.8 L582.4 506.7 Z" fill="#fff" stroke="#555" stroke-width=".7"/>
<path d="M597.1 501 V509 L599.1 507.5 L600.4 510 L601.7 509.3 L600.5 506.8 L602.9 506.7 Z" fill="#fff" stroke="#555" stroke-width=".7"/>
<path d="M617.7 501 V509 L619.7 507.5 L621.0 510 L622.3 509.3 L621.1 506.8 L623.5 506.7 Z" fill="#fff" stroke="#555" stroke-width=".7"/>
<path d="M638.2 501 V509 L640.2 507.5 L641.5 510 L642.8 509.3 L641.6 506.8 L644.0 506.7 Z" fill="#fff" stroke="#555" stroke-width=".7"/>
<path d="M658.8 501 V509 L660.8 507.5 L662.0 510 L663.4 509.3 L662.1 506.8 L664.5 506.7 Z" fill="#fff" stroke="#555" stroke-width=".7"/>
<path d="M484.5 496 V518" stroke="#8a80e8" stroke-width="1" stroke-dasharray="3 2" opacity=".7"/>
<rect x="409" y="509" width="2.5" height="2.5" fill="#222"/>
<circle cx="452" cy="508.5" r="3" fill="none" stroke="#444" stroke-width=".8"/>
<path d="M471 506 Q469 509 472 510 Q474 511 472 513" stroke="#555" stroke-width=".8" fill="none"/>
<rect x="490" y="506" width="5" height="3" fill="none" stroke="#444" stroke-width=".7"/><rect x="491" y="509" width="3" height="2" fill="none" stroke="#444" stroke-width=".7"/>
<ellipse cx="512" cy="509" rx="3" ry="2" fill="#e6a040" stroke="#444" stroke-width=".6"/>
<path d="M530 505 V506 M532 505 V506 M530 507.5 V508.5 M532 507.5 V508.5 M531 510 V511" stroke="#222" stroke-width="1"/>
<text x="550" y="512" font-size="6" fill="#555" font-family="Liberation Sans">A</text>
<path d="M571 505 H576 M573.5 505 V511 M571 511 H576" stroke="#555" stroke-width=".8"/><rect x="572.5" y="506" width="2" height="5" fill="#9ad0f0"/>
<path d="M592 512 Q593 507 597 505" stroke="#9ad0f0" stroke-width="1.2" fill="none"/><path d="M592 512 Q593 507 597 505" stroke="#555" stroke-width=".5" fill="none"/>
<path d="M611 512 L614 505 L617 512 Z" fill="none" stroke="#555" stroke-width=".8"/>
<path d="M631 508 H637" stroke="#9ad0f0" stroke-width="1.6"/>
<text x="651" y="509" font-size="4" fill="#555" font-family="Liberation Sans">AB</text><path d="M652 510 Q655 511 656 513" stroke="#9ad0f0" stroke-width="1.2" fill="none"/>
</svg>
<svg class="a" style="left:832px;top:99px" width="7" height="6" viewBox="0 0 7 6"><path d="M1 1 L5.5 5 M5.5 1 L1 5" stroke="#3a5a98" stroke-width="1.1"/></svg>
<!-- right panels -->
<div class="a" style="left:843px;top:95px;width:161px;height:168px;background:#fff;border:1px solid #a9c5ea"></div>
<div class="a" style="left:844px;top:96px;width:159px;height:14px;background:linear-gradient(#f6f9fd,#eaf1fa);border-bottom:1px solid #c2d6ee"></div>
<div class="t" style="left:846px;top:100px;font-size:8.2px;color:#222">Layers</div>
<svg class="a" style="left:980px;top:98px" width="22" height="9" viewBox="0 0 22 9">
<rect x="2.6" y="1.8" width="3.8" height="5" rx="1.4" fill="#4a6ca8"/><rect x="4" y="2.6" width="1" height="3" fill="#e8eef8"/><path d="M4.5 6.8 V8" stroke="#7a92c0" stroke-width=".8"/>
<path d="M14 2 L18.5 6.5 M18.5 2 L14 6.5" stroke="#3a5a98" stroke-width="1.1"/>
</svg>
<div class="tb" style="left:845px;top:111px"></div><div class="tb" style="left:861px;top:111px"></div><div class="tb" style="left:876px;top:111px"></div><div class="tb" style="left:891px;top:111px"></div>
<svg class="a" style="left:845px;top:111px" width="62" height="14" viewBox="0 0 62 14">
<path d="M3 4 L10 3 L9 5 L2 6 Z" fill="#3aa6e0"/><path d="M3 6.5 L10 5.5 L9 7.5 L2 8.5 Z" fill="#f3b51b"/><path d="M3 9 L8 8.3 L7.5 10 L2 10.7 Z" fill="#3aa6e0"/>
<circle cx="9.5" cy="9.5" r="3" fill="#38a838"/><path d="M7.8 9.5 H11.2 M9.5 7.8 V11.2" stroke="#fff" stroke-width="1"/>
<path d="M23 2 L28 7 H25.5 V12 H20.5 V7 H18 Z" fill="#6a9ee8" stroke="#3a6ac0" stroke-width=".6"/>
<path d="M38 12 L43 7 H40.5 V2 H35.5 V7 H33 Z" fill="#6a9ee8" stroke="#3a6ac0" stroke-width=".6"/>
<path d="M48 8.5 L54 4.5 L58.5 6 L58.5 8.5 L52.5 12.5 L48 11 Z" fill="#e05a66"/><path d="M48 8.5 L51.5 6.2 L55 8 L52.5 12.5 L48 11 Z" fill="#4a78e0"/><path d="M48 8.5 L54 4.5 L58.5 6 L52.5 10 Z" fill="#f08a90" opacity=".7"/><path d="M48 8.5 L51.5 6.2 L55 8 L52 10 Z" fill="#7aa0f0" opacity=".8"/>
</svg>
<div class="a" style="left:908px;top:113px;width:10px;height:10px;border:1px solid #aac0dc;background:linear-gradient(#e6eef8,#fafcff)"></div>
<div class="t" style="left:920px;top:116px;font-size:8.2px;color:#222">Use Layer Attributes</div>
<!-- layers grid -->
<div class="a" style="left:846px;top:126px;width:156px;height:136px;background:#fff;border-top:1px solid #d0d4da;border-left:2px solid #c8cbd0;border-right:2px solid #d4d4d4;border-bottom:2px solid #d4d4d4"></div>
<div class="a" style="left:848px;top:127px;width:153px;height:18px;background:linear-gradient(#dde9f8,#d0e1f6 50%,#c6daf3 55%,#d4e4f7);border-bottom:1px solid #b5cdea"></div>
<div class="a" style="left:862px;top:127px;width:1px;height:34px;background:#b8cfe9"></div>
<div class="a" style="left:877px;top:127px;width:1px;height:34px;background:#b8cfe9"></div>
<div class="a" style="left:929px;top:127px;width:1px;height:34px;background:#b8cfe9"></div>
<div class="a" style="left:964px;top:127px;width:1px;height:34px;background:#b8cfe9"></div>
<div class="t" style="left:880px;top:134px;font-size:8.2px;color:#222">Name</div>
<div class="a" style="left:848px;top:160px;width:153px;height:1px;background:#b8cfe9"></div>
<svg class="a" style="left:848px;top:146px" width="30" height="14" viewBox="848 146 30 14">
<path d="M850.5 152.6 Q855.7 146.8 861 152.6 Q855.7 157.8 850.5 152.6 Z" fill="#fff" stroke="#c07838" stroke-width="1.1"/>
<circle cx="855.7" cy="152.6" r="2.4" fill="#80aee8"/><circle cx="855.5" cy="152.2" r="1" fill="#101820"/>
<path d="M866.6 153.8 L869.8 157 L875.8 150.2" stroke="#6a9a28" stroke-width="3.4" fill="none" stroke-linejoin="round" stroke-linecap="round"/>
<path d="M866.6 153.8 L869.8 157 L875.8 150.2" stroke="#c4e464" stroke-width="1.8" fill="none" stroke-linejoin="round" stroke-linecap="round"/>
</svg>
<div class="t" style="left:880px;top:150px;font-size:8.2px;color:#222">CAD</div>
<div class="a" style="left:933px;top:145px;width:28px;height:15px;border:1px solid #c8d4e4;background:#fff"></div>
<div class="a" style="left:934px;top:146px;width:18px;height:13px;background:#0000ff"></div>
<svg class="a" style="left:954px;top:150px" width="5" height="4" viewBox="0 0 5 4"><path d="M.5 1 H4.5 L2.5 3.5 Z" fill="#5a6a80"/></svg>
<div class="a" style="left:967px;top:145px;width:34px;height:15px;border:1px solid #b8cde8;border-right:none;background:linear-gradient(#fdfeff,#e4eefa 50%,#cfe2f7)"></div>
<div class="a" style="left:970px;top:152.5px;width:25px;height:1.5px;background:#5060f0"></div>
<!-- h scrollbar -->
<div class="a" style="left:848px;top:250px;width:153px;height:11px;background:linear-gradient(#eef4fc,#dce8f7);border-top:1px solid #cddcf0"></div>
<div class="a" style="left:859px;top:251px;width:123px;height:9px;background:linear-gradient(#e8f1fc,#c6dbf5 60%,#b6cff0);border:1px solid #a8c2e6;border-radius:1px"></div>
<div class="a" style="left:919px;top:253px;width:3px;height:5px;border-left:1px solid #7a96c0;border-right:1px solid #7a96c0"></div>
<svg class="a" style="left:850px;top:252px" width="150" height="7" viewBox="0 0 150 7"><path d="M3 3.5 L5.5 1 V6 Z" fill="#456"/><path d="M143 1 L145.5 3.5 L143 6 Z" fill="#456"/></svg>
<!-- layers tabs -->
<div class="a" style="left:844px;top:264px;width:58px;height:14px;background:linear-gradient(#e6f0fb,#d8e6f7);border:1px solid #b7cfee;border-top:none"></div>
<div class="t" style="left:848px;top:268px;font-size:8.2px;color:#222">Measure Entity</div>
<div class="a" style="left:901px;top:263px;width:28px;height:16px;background:#f4f8fd;border:1px solid #c2d6ee;border-top:none"></div>
<div class="t" style="left:904px;top:268px;font-size:8.2px;color:#222">Layers</div>
<!-- UCS panel -->
<div class="a" style="left:843px;top:282px;width:161px;height:231px;background:#fff;border:1px solid #a9c5ea"></div>
<div class="a" style="left:844px;top:283px;width:159px;height:14px;background:linear-gradient(#f6f9fd,#eaf1fa);border-bottom:1px solid #c2d6ee"></div>
<div class="t" style="left:846px;top:286px;font-size:8.2px;color:#222">UCS</div>
<svg class="a" style="left:980px;top:285px" width="22" height="9" viewBox="0 0 22 9">
<rect x="2.6" y="1.8" width="3.8" height="5" rx="1.4" fill="#4a6ca8"/><rect x="4" y="2.6" width="1" height="3" fill="#e8eef8"/><path d="M4.5 6.8 V8" stroke="#7a92c0" stroke-width=".8"/>
<path d="M14 2 L18.5 6.5 M18.5 2 L14 6.5" stroke="#3a5a98" stroke-width="1.1"/>
</svg>
<div class="tb" style="left:845px;top:297px"></div><div class="tb" style="left:861px;top:297px"></div><div class="tb" style="left:876px;top:297px"></div>
<svg class="a" style="left:845px;top:297px" width="46" height="14" viewBox="0 0 46 14">
<path d="M3.5 3 V11 H6" stroke="#2a48c8" stroke-width="1.3" fill="none"/><circle cx="3.5" cy="3" r="1" fill="#1a38b8"/><path d="M3 11 H5.5" stroke="#e02020" stroke-width="1.2"/>
<circle cx="9.3" cy="9.3" r="3.1" fill="#3aa040"/><circle cx="9.3" cy="9.3" r="2.2" fill="#58c050"/><path d="M7.8 9.3 H10.8 M9.3 7.8 V10.8" stroke="#fff" stroke-width="1"/>
<path d="M19.5 3 V11" stroke="#2a48c8" stroke-width="1.3"/><circle cx="19.5" cy="3" r="1" fill="#1a38b8"/><path d="M19.5 11 H27" stroke="#e02020" stroke-width="1.2"/><path d="M26 9.8 L28 11 L26 12.2 Z" fill="#e02020"/>
<path d="M20 10.5 L25 5" stroke="#38a838" stroke-width="1.1"/><path d="M22 11 L27 6.5" stroke="#d09030" stroke-width="1.8"/>
<path d="M33 8.5 L39 4.5 L43.5 6 L43.5 8.5 L37.5 12.5 L33 11 Z" fill="#e05a66"/>
<path d="M33 8.5 L36.5 6.2 L40 8 L37.5 12.5 L33 11 Z" fill="#4a78e0"/><path d="M33 8.5 L39 4.5 L43.5 6 L37.5 10 Z" fill="#f08a90" opacity=".7"/><path d="M33 8.5 L36.5 6.2 L40 8 L37 10 Z" fill="#7aa0f0" opacity=".8"/>
</svg>
<!-- UCS grid -->
<div class="a" style="left:846px;top:315px;width:156px;height:197px;background:#fff;border-top:1px solid #d0d4da;border-left:2px solid #c8cbd0;border-right:2px solid #d4d4d4;border-bottom:2px solid #d4d4d4"></div>
<div class="a" style="left:848px;top:316px;width:152px;height:18px;background:linear-gradient(#dde9f8,#d0e1f6 50%,#c6daf3 55%,#d4e4f7);border-bottom:1px solid #b5cdea"></div>
<div class="a" style="left:848px;top:334px;width:15px;height:48px;background:#dde8f6"></div>
<div class="a" style="left:864px;top:334px;width:136px;height:16px;background:#ebebeb;border-top:1px solid #dcdcdc;border-bottom:1px solid #d4d4d4"></div>
<div class="a" style="left:863px;top:316px;width:1px;height:66px;background:#b8cfe9"></div>
<div class="a" style="left:878px;top:316px;width:1px;height:66px;background:#b8cfe9"></div>
<div class="a" style="left:848px;top:349px;width:152px;height:1px;background:#c7d6ea"></div>
<div class="a" style="left:848px;top:365px;width:152px;height:1px;background:#c7d6ea"></div>
<div class="a" style="left:848px;top:381px;width:152px;height:1px;background:#c7d6ea"></div>
<div class="t" style="left:881px;top:323px;font-size:8.2px;color:#222">Name</div>
<svg class="a" style="left:990px;top:320px" width="8" height="9" viewBox="0 0 8 9"><path d="M.5 .5 H7.5 L4.8 4 V8 L3.2 7 V4 Z" fill="none" stroke="#6a8ab8" stroke-width=".8"/></svg>
<svg class="a" style="left:852px;top:338px" width="25" height="9" viewBox="0 0 25 9"><path d="M2.5 1.5 L5 4.5 L2.5 7.5" stroke="#6a8ac0" stroke-width="1" fill="none"/>
<path d="M14.5 4.8 L17.5 7.6 L23.2 1.5" stroke="#6a9a28" stroke-width="3.2" fill="none" stroke-linejoin="round" stroke-linecap="round"/><path d="M14.5 4.8 L17.5 7.6 L23.2 1.5" stroke="#c4e464" stroke-width="1.7" fill="none" stroke-linejoin="round" stroke-linecap="round"/></svg>
<div class="t" style="left:881px;top:339px;font-size:8.2px;color:#222">Top(X/Y)</div>
<div class="t" style="left:881px;top:355px;font-size:8.2px;color:#222">Front(X/Z)</div>
<div class="t" style="left:881px;top:371px;font-size:8.2px;color:#222">Side(Y/Z)</div>
<!-- UCS tabs -->
<div class="a" style="left:844px;top:512px;width:21px;height:15px;background:#f4f8fd;border:1px solid #c2d6ee;border-top:none"></div>
<div class="t" style="left:847px;top:517px;font-size:8.2px;color:#222">UCS</div>
<div class="a" style="left:865px;top:513px;width:32px;height:13px;background:linear-gradient(#e6f0fb,#d8e6f7);border:1px solid #b7cfee;border-top:none;border-left:none"></div>
<div class="t" style="left:868px;top:517px;font-size:8.2px;color:#222">Posting</div>
<!-- BobCAD Live tab -->
<div class="a" style="left:1007px;top:96px;width:13px;height:50px;background:linear-gradient(90deg,#f2f7fd,#e2edf9);border:1px solid #b7cfee"></div>
<div class="t" style="left:1009px;top:143px;font-size:7px;color:#222;transform:rotate(-90deg);transform-origin:0 0">BobCAD Live</div>
<div class="a" style="left:1023px;top:92px;width:1px;height:440px;background:#8eaedc"></div>

<!-- status bar -->
<div class="a" style="left:0;top:532px;width:1024px;height:19px;background:linear-gradient(#c5d7ed 0px,#d2e2f4 3px,#dce9f8 5px,#deebf9 100%);border-top:1px solid #8fb0dc"></div>
<div class="a" style="left:0;top:551px;width:1024px;height:1px;background:#111"></div>
<div class="a" style="left:31px;top:551px;width:220px;height:1px;background:#d4d4d4"></div>
<div class="t" style="left:2px;top:538px;font-size:8.2px;color:#222">For Help, Press F1</div>
<div class="t" style="left:707px;top:538px;font-size:8.2px;color:#222">X=1.7223</div>
<div class="a" style="left:743px;top:533px;width:1px;height:17px;background:#b9cde6"></div>
<div class="t" style="left:748px;top:538px;font-size:8.2px;color:#222">Y=-5.6624</div>
<div class="a" style="left:787px;top:533px;width:1px;height:17px;background:#b9cde6"></div>
<div class="t" style="left:792px;top:538px;font-size:8.2px;color:#222">Z=0.0000</div>
<div class="a" style="left:829px;top:533px;width:1px;height:17px;background:#b9cde6"></div>
<div class="a" style="left:833px;top:534px;width:15px;height:15px;border:1px solid #f4d070;background:linear-gradient(#fde8c8 0%,#fcdcb0 45%,#f9b248 50%,#fbc060 85%,#fcd070 100%);box-shadow:inset 0 0 0 1px rgba(255,255,240,.5)"></div>
<svg class="a" style="left:834px;top:535px" width="13" height="13" viewBox="0 0 13 13"><path d="M2.5 1.5 V10.5 M2 1.5 H3.5 M2 10.5 H3.5" stroke="#38c0c8" stroke-width="1"/><path d="M7 2 V9.5 L8.6 8.2 L9.6 10.5 L10.8 10 L9.8 7.7 L11.8 7.6 Z" fill="#fff" stroke="#555" stroke-width=".7"/></svg>
<div class="a" style="left:851px;top:534px;width:15px;height:15px;border:1px solid #f4d070;background:linear-gradient(#fde8c8 0%,#fcdcb0 45%,#f9b248 50%,#fbc060 85%,#fcd070 100%);box-shadow:inset 0 0 0 1px rgba(255,255,240,.5)"></div>
<svg class="a" style="left:852px;top:535px" width="13" height="13" viewBox="0 0 13 13"><path d="M3 5 Q4 1.5 7 1.5 Q10.5 1.5 9.8 5.5 L7.5 7.5" stroke="#d81010" stroke-width="2.2" fill="none"/><path d="M5.5 8 V11.5 M5.5 9.8 H11 M11 8 V11.5" stroke="#3a3020" stroke-width="1.1"/><circle cx="3" cy="5.5" r=".9" fill="#aaa"/></svg>
<div class="a" style="left:869px;top:534px;width:39px;height:14px;background:#fff;border:1px solid #c4ccd6"></div>
<div class="t" style="left:871px;top:538px;font-size:8.2px;color:#222">0.0625</div>
<div class="a" style="left:910px;top:534px;width:28px;height:14px;background:linear-gradient(#f4f8fd,#dce8f7);border:1px solid #bfd2ea"></div>
<div class="a" style="left:911px;top:534px;width:19px;height:14px;background:#0000ff"></div>
<svg class="a" style="left:932px;top:539px" width="5" height="4" viewBox="0 0 5 4"><path d="M.5 1 H4.5 L2.5 3.5 Z" fill="#5a6a80"/></svg>
<div class="a" style="left:942px;top:535px;width:48px;height:13px;background:linear-gradient(#f8fbff,#e4eefa 50%,#cfe2f7);border:1px solid #b8cde8"></div>
<div class="a" style="left:945px;top:540px;width:33px;height:2px;background:#2a3ef0"></div>
<svg class="a" style="left:982px;top:539px" width="5" height="4" viewBox="0 0 5 4"><path d="M.5 1 H4.5 L2.5 3.5 Z" fill="#5a6a80"/></svg>
<div class="a" style="left:993px;top:535px;width:29px;height:13px;background:linear-gradient(#f8fbff,#e4eefa 50%,#cfe2f7);border:1px solid #b8cde8"></div>
<div class="t" style="left:996px;top:538px;font-size:8.2px;color:#222">inch</div>
<svg class="a" style="left:1015px;top:539px" width="5" height="4" viewBox="0 0 5 4"><path d="M.5 1 H4.5 L2.5 3.5 Z" fill="#5a6a80"/></svg>
</body></html>
